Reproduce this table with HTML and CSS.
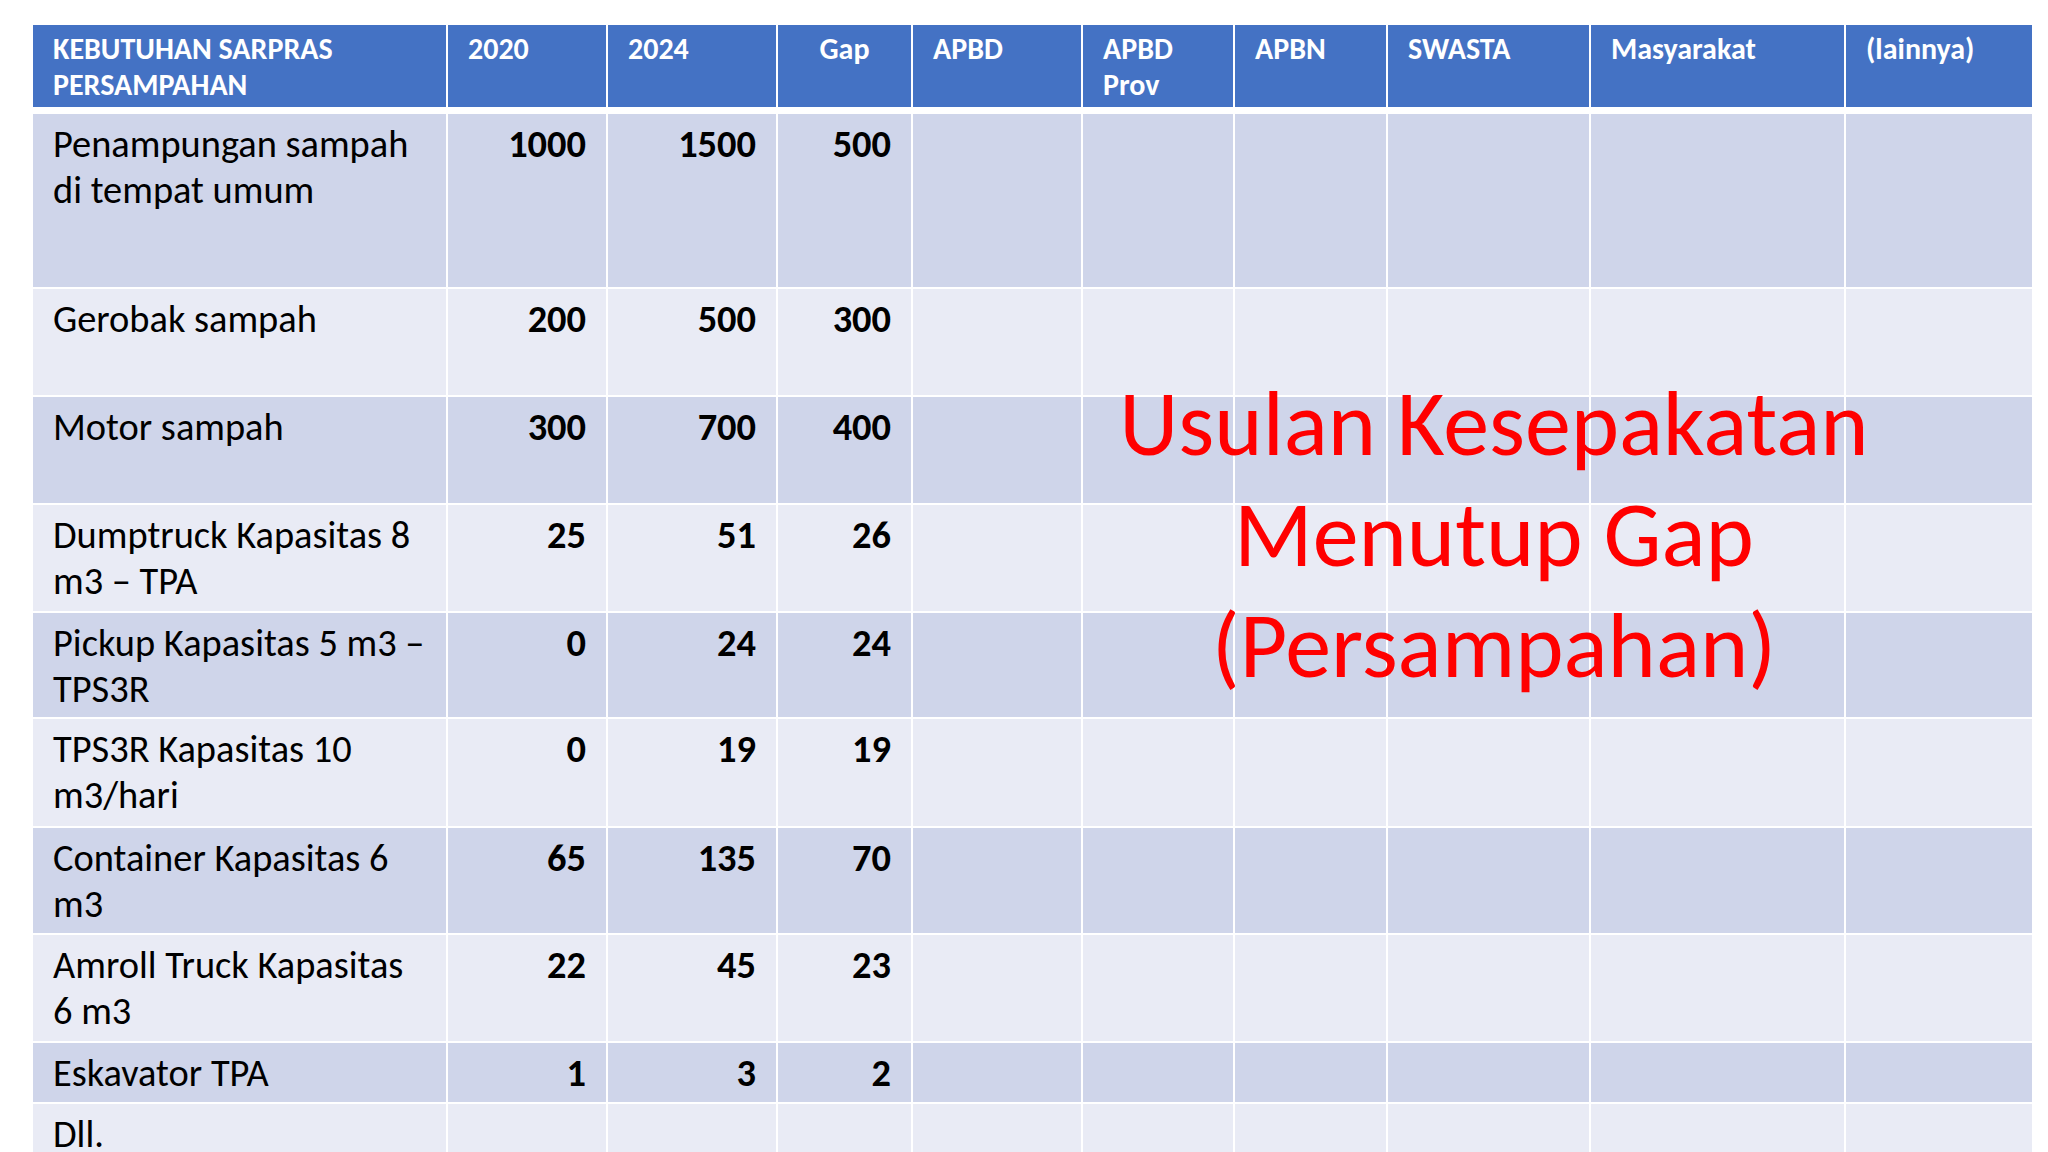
FILE: index.html
```html
<!DOCTYPE html>
<html lang="id">
<head>
<meta charset="utf-8">
<title>Kebutuhan Sarpras Persampahan</title>
<link rel="stylesheet" href="styles.css">
</head>
<body>
<main class="slide">
  <div class="grid">
    <div class="hd name">KEBUTUHAN SARPRAS PERSAMPAHAN</div>
    <div class="hd">2020</div>
    <div class="hd">2024</div>
    <div class="hd center">Gap</div>
    <div class="hd">APBD</div>
    <div class="hd">APBD Prov</div>
    <div class="hd">APBN</div>
    <div class="hd">SWASTA</div>
    <div class="hd">Masyarakat</div>
    <div class="hd">(lainnya)</div>

    <div class="c dark name">Penampungan sampah di tempat umum</div>
    <div class="c dark num">1000</div><div class="c dark num">1500</div><div class="c dark num">500</div>
    <div class="c dark"></div><div class="c dark"></div><div class="c dark"></div><div class="c dark"></div><div class="c dark"></div><div class="c dark"></div>

    <div class="c light name">Gerobak sampah</div>
    <div class="c light num">200</div><div class="c light num">500</div><div class="c light num">300</div>
    <div class="c light"></div><div class="c light"></div><div class="c light"></div><div class="c light"></div><div class="c light"></div><div class="c light"></div>

    <div class="c dark name">Motor sampah</div>
    <div class="c dark num">300</div><div class="c dark num">700</div><div class="c dark num">400</div>
    <div class="c dark"></div><div class="c dark"></div><div class="c dark"></div><div class="c dark"></div><div class="c dark"></div><div class="c dark"></div>

    <div class="c light name">Dumptruck Kapasitas 8 m3 – TPA</div>
    <div class="c light num">25</div><div class="c light num">51</div><div class="c light num">26</div>
    <div class="c light"></div><div class="c light"></div><div class="c light"></div><div class="c light"></div><div class="c light"></div><div class="c light"></div>

    <div class="c dark name">Pickup Kapasitas 5 m3 – TPS3R</div>
    <div class="c dark num">0</div><div class="c dark num">24</div><div class="c dark num">24</div>
    <div class="c dark"></div><div class="c dark"></div><div class="c dark"></div><div class="c dark"></div><div class="c dark"></div><div class="c dark"></div>

    <div class="c light name">TPS3R Kapasitas 10 m3/hari</div>
    <div class="c light num">0</div><div class="c light num">19</div><div class="c light num">19</div>
    <div class="c light"></div><div class="c light"></div><div class="c light"></div><div class="c light"></div><div class="c light"></div><div class="c light"></div>

    <div class="c dark name">Container Kapasitas 6 m3</div>
    <div class="c dark num">65</div><div class="c dark num">135</div><div class="c dark num">70</div>
    <div class="c dark"></div><div class="c dark"></div><div class="c dark"></div><div class="c dark"></div><div class="c dark"></div><div class="c dark"></div>

    <div class="c light name">Amroll Truck Kapasitas 6 m3</div>
    <div class="c light num">22</div><div class="c light num">45</div><div class="c light num">23</div>
    <div class="c light"></div><div class="c light"></div><div class="c light"></div><div class="c light"></div><div class="c light"></div><div class="c light"></div>

    <div class="c dark name">Eskavator TPA</div>
    <div class="c dark num">1</div><div class="c dark num">3</div><div class="c dark num">2</div>
    <div class="c dark"></div><div class="c dark"></div><div class="c dark"></div><div class="c dark"></div><div class="c dark"></div><div class="c dark"></div>

    <div class="c light name">Dll.</div>
    <div class="c light"></div><div class="c light"></div><div class="c light"></div>
    <div class="c light"></div><div class="c light"></div><div class="c light"></div><div class="c light"></div><div class="c light"></div><div class="c light"></div>
  </div>

  <div class="overlay">Usulan Kesepakatan<br>Menutup Gap<br>(Persampahan)</div>
</main>
</body>
</html>
```

FILE: styles.css
```css
html, body {
  margin: 0;
  padding: 0;
  background: #ffffff;
}

body {
  width: 2048px;
  height: 1152px;
  overflow: hidden;
  font-family: Carlito, Calibri, Lato, "Open Sans", sans-serif;
}

.slide {
  position: relative;
  width: 2048px;
  height: 1152px;
  padding: 25px 0 0 33px;
  box-sizing: border-box;
  overflow: hidden;
}

.grid {
  display: grid;
  grid-template-columns: 413px 158px 168px 133px 168px 150px 151px 201px 253px 186px;
  grid-template-rows: 87px 173px 106px 106px 106px 104px 107px 105px 106px 59px 106px;
  gap: 2px;
}

.hd {
  height: 82px;
  box-sizing: border-box;
  background: #4472c4;
  color: #ffffff;
  font-weight: 700;
  font-size: 30px;
  line-height: 36px;
  padding: 6px 18px 0 20px;
}

.hd.center {
  text-align: center;
  padding-left: 18px;
}

.c {
  box-sizing: border-box;
  color: #000000;
  font-size: 38.4px;
  line-height: 46px;
  padding: 7px 20px 0 20px;
}

.c.name {
  padding-left: 20px;
  padding-right: 19px;
}

.dark {
  background: #cfd5ea;
}

.light {
  background: #e9ebf5;
}

.num {
  text-align: right;
  font-weight: 700;
}

.overlay {
  position: absolute;
  left: 1044px;
  top: 368px;
  width: 900px;
  text-align: center;
  color: #ff0000;
  font-size: 92px;
  line-height: 111px;
}
```
